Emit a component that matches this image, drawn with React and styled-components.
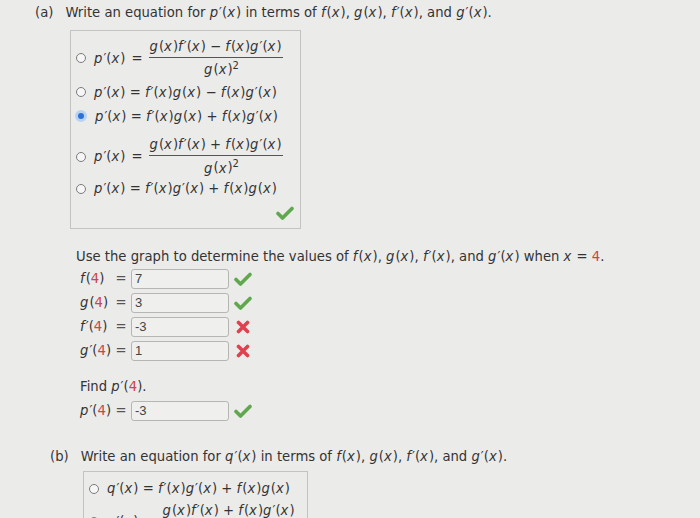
import React from 'react'
import styled, { createGlobalStyle } from 'styled-components'

const Global = createGlobalStyle`
  body {
    margin: 0;
    background: #ebebea;
    color: #333;
    font-family: "DejaVu Sans", Verdana, sans-serif;
    font-size: 13.2px;
  }
`

const Page = styled.div`
  width: 700px;
  height: 518px;
  overflow: hidden;
  padding-top: 4px;
  box-sizing: border-box;
`

const Part = styled.section`
  padding-left: ${p => p.indent}px;
  margin-top: ${p => p.top || 0}px;
`

const Heading = styled.div`
  display: flex;
  gap: 12px;
  line-height: 18px;
`

const I = styled.i`
  font-style: italic;
  margin-right: 1px;
`

const Red = styled.span`
  color: #c9464a;
`

const ChoiceBox = styled.div`
  margin: ${p => p.top}px 0 0 ${p => p.left}px;
  width: ${p => p.width}px;
  border: 1px solid #c3c3c0;
  padding: 5px 6px 6px 5px;
  box-sizing: border-box;
  display: flex;
  flex-direction: column;
`

const Option = styled.label`
  display: flex;
  align-items: center;
  gap: 8px;
  min-height: 24px;
  padding: ${p => p.pad || '0'};
`

const Radio = styled.span`
  width: 10px;
  height: 10px;
  border-radius: 50%;
  flex: none;
  box-sizing: border-box;
  border: ${p => (p.checked ? '3px solid #b9d3f2' : '1px solid #7b7b7b')};
  background: ${p => (p.checked ? '#2e6fd6' : '#f6f6f6')};
  ${p => p.checked && 'width: 12px; height: 12px; margin-left: -1px;'}
`

const Expr = styled.span`
  display: flex;
  align-items: center;
  gap: 6px;
  white-space: nowrap;
`

const Frac = styled.span`
  display: inline-flex;
  flex-direction: column;
  align-items: center;
`

const Num = styled.span`
  border-bottom: 1px solid #555;
  padding: 0 1px 3px;
`

const Den = styled.span`
  padding-top: 2px;
  margin-left: 12px;
`

const Sup = styled.sup`
  font-size: 10px;
`

const MarkRow = styled.div`
  display: flex;
  justify-content: flex-end;
  padding: 5px 0 2px;
`

const Prompt = styled.div`
  margin: ${p => p.top}px 0 0 ${p => p.left}px;
  line-height: 18px;
`

const Grid = styled.div`
  display: grid;
  grid-template-columns: 31px 20px 98px 28px;
  align-items: center;
  row-gap: 4px;
  margin: ${p => p.top}px 0 0 ${p => p.left}px;
`

const Label = styled.span`
  white-space: nowrap;
`

const Eq = styled.span`
  text-align: center;
  color: #555;
`

const Field = styled.div`
  height: 20px;
  border: 1px solid #b5b5b2;
  border-radius: 3px;
  background: #efefee;
  font-family: "Liberation Sans", Arial, sans-serif;
  font-size: 13px;
  line-height: 18px;
  padding-left: 3px;
  box-sizing: border-box;
  color: #444;
`

const Mark = styled.span`
  display: flex;
  justify-content: center;
`

const Check = () => (
  <svg width="18" height="14" viewBox="0 0 18 14">
    <path d="M2 7.5 L6.5 12 L16 2.5" fill="none" stroke="#5fa84d" strokeWidth="3.6" strokeLinecap="round" strokeLinejoin="round" />
  </svg>
)

const Cross = () => (
  <svg width="14" height="14" viewBox="0 0 14 14">
    <path d="M2.5 2.5 L11.5 11.5 M11.5 2.5 L2.5 11.5" fill="none" stroke="#e0414f" strokeWidth="3.6" strokeLinecap="round" />
  </svg>
)

const P = ({ f = 'p' }) => (
  <span>
    <I>{f}</I>′(<I>x</I>)
  </span>
)

const fx = <><I>f</I>(<I>x</I>)</>
const gx = <><I>g</I>(<I>x</I>)</>
const fpx = <><I>f</I>′(<I>x</I>)</>
const gpx = <><I>g</I>′(<I>x</I>)</>

const terms = <>{fx}, {gx}, {fpx}, and {gpx}</>

function Fraction({ sign }) {
  return (
    <Frac>
      <Num>{gx}{fpx} {sign} {fx}{gpx}</Num>
      <Den>{gx}<Sup>2</Sup></Den>
    </Frac>
  )
}

const rows = [
  { label: <><I>f</I>(<Red>4</Red>)</>, value: '7', ok: true },
  { label: <><I>g</I>(<Red>4</Red>)</>, value: '3', ok: true },
  { label: <><I>f</I>′(<Red>4</Red>)</>, value: '-3', ok: false },
  { label: <><I>g</I>′(<Red>4</Red>)</>, value: '1', ok: false },
]

export default function App() {
  return (
    <Page>
      <Global />
      <Part indent={35}>
        <Heading>
          <span>(a)</span>
          <span>Write an equation for <P /> in terms of {terms}.</span>
        </Heading>
      </Part>

      <ChoiceBox top={8} left={70} width={231}>
        <Option pad="3px 0 3px">
          <Radio />
          <Expr><P /> = <Fraction sign="−" /></Expr>
        </Option>
        <Option>
          <Radio />
          <Expr><span><P /> = {fpx}{gx} − {fx}{gpx}</span></Expr>
        </Option>
        <Option>
          <Radio checked />
          <Expr><span><P /> = {fpx}{gx} + {fx}{gpx}</span></Expr>
        </Option>
        <Option pad="9px 0 1px">
          <Radio />
          <Expr><P /> = <Fraction sign="+" /></Expr>
        </Option>
        <Option>
          <Radio />
          <Expr><span><P /> = {fpx}{gpx} + {fx}{gx}</span></Expr>
        </Option>
        <MarkRow><Check /></MarkRow>
      </ChoiceBox>

      <Prompt top={19} left={76}>
        Use the graph to determine the values of {terms} when <I>x</I> = <Red>4</Red>.
      </Prompt>

      <Grid top={3} left={80}>
        {rows.map((r, i) => (
          <React.Fragment key={i}>
            <Label>{r.label}</Label>
            <Eq>=</Eq>
            <Field>{r.value}</Field>
            <Mark>{r.ok ? <Check /> : <Cross />}</Mark>
          </React.Fragment>
        ))}
      </Grid>

      <Prompt top={17} left={80}>
        Find <I>p</I>′(<Red>4</Red>).
      </Prompt>

      <Grid top={5} left={80}>
        <Label><I>p</I>′(<Red>4</Red>)</Label>
        <Eq>=</Eq>
        <Field>-3</Field>
        <Mark><Check /></Mark>
      </Grid>

      <Part indent={50} top={27}>
        <Heading>
          <span>(b)</span>
          <span>Write an equation for <P f="q" /> in terms of {terms}.</span>
        </Heading>
      </Part>

      <ChoiceBox top={5} left={83} width={225}>
        <Option>
          <Radio />
          <Expr><span><P f="q" /> = {fpx}{gpx} + {fx}{gx}</span></Expr>
        </Option>
        <Option pad="2px 0 1px">
          <Radio />
          <Expr><P f="q" /> = <Fraction sign="+" /></Expr>
        </Option>
      </ChoiceBox>
    </Page>
  )
}
